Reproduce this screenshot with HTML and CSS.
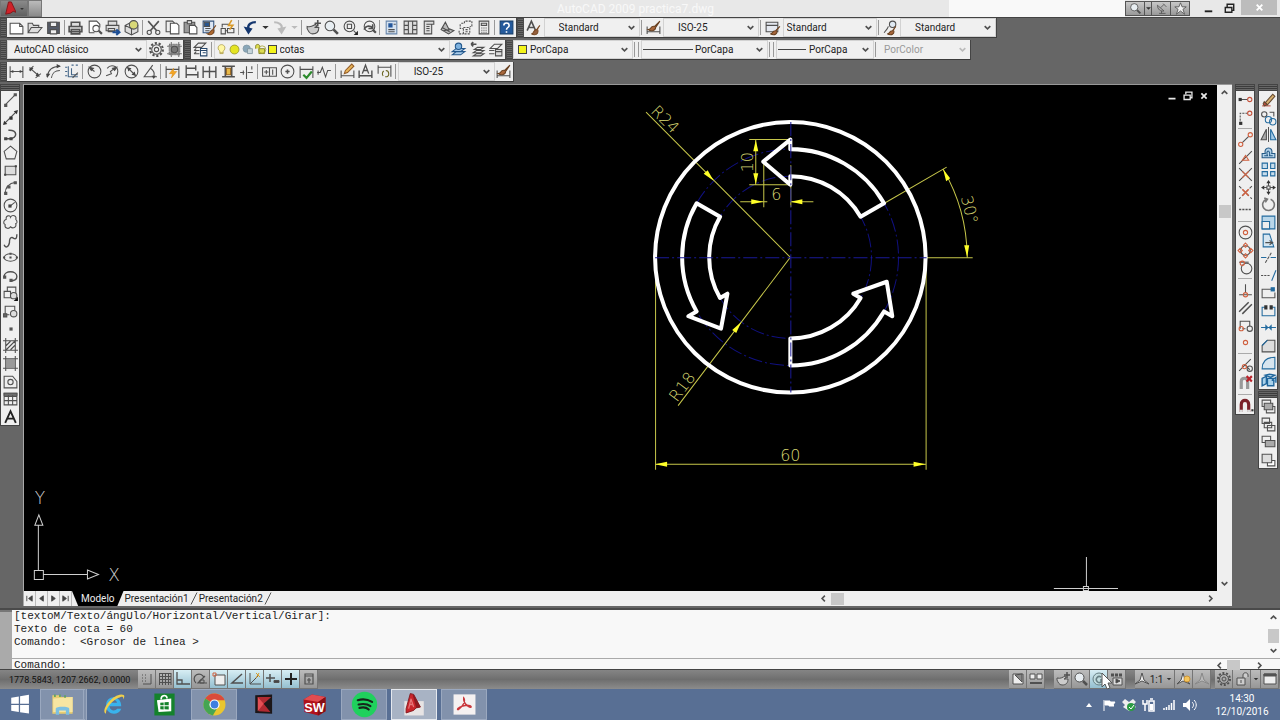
FILE: index.html
```html
<!DOCTYPE html>
<html lang="es">
<head>
<meta charset="utf-8">
<title>AutoCAD 2009 practica7.dwg</title>
<link rel="stylesheet" href="styles.css">
</head>
<body>
<svg class="sprite" aria-hidden="true">
<symbol id="new" viewBox="0 0 16 16"><path d="M2 4h9l3 3v7H2zM11 4v3h3" fill="#fff"/></symbol>
<symbol id="open" viewBox="0 0 16 16"><path d="M2 13V4h4l1 2h5v2M2 13l3-5h10l-4 5z" fill="#ddd"/></symbol>
<symbol id="save" viewBox="0 0 16 16"><path d="M2.500 3h11v10.500h-11z" fill="#555b68"/><path d="M5 3h6v4H5zM5 10h6v4H5z" fill="#eee"/></symbol>
<symbol id="print" viewBox="0 0 16 16"><path d="M4 7V3h8v4M2 7h12v5H2zM4 10h8v4H4z" fill="#ddd" stroke-width="1.500"/></symbol>
<symbol id="preview" viewBox="0 0 16 16"><path d="M3 13V2h7l3 3v3M3 13h5" fill="#fff"/><circle cx="9.500" cy="9" r="3"/><path d="M12 11l3 3" stroke-width="2"/></symbol>
<symbol id="publish" viewBox="0 0 16 16"><path d="M4 6V2h8v4M2 6h12v5H2zM4 9h6v3H4z" fill="#ddd"/><path d="M8 12.500h6M11.500 10l3 2.500-3 2.500" stroke="#1d4f96" stroke-width="2"/></symbol>
<symbol id="dwf" viewBox="0 0 16 16"><path d="M2 6l6-3 6 3v6l-6 3-6-3zM2 6l6 3 6-3M8 9v6" fill="#ddd"/><circle cx="10" cy="5.500" r="4" fill="#d8d878"/></symbol>
<symbol id="cut" viewBox="0 0 16 16"><path d="M3 2l8 9M13 2L5 11" stroke-width="1.500"/><circle cx="4" cy="12.500" r="2"/><circle cx="12" cy="12.500" r="2"/></symbol>
<symbol id="copy" viewBox="0 0 16 16"><path d="M2 2h6l2 2v8H2z" fill="#eee"/><path d="M6 4h6l2 2v8H6z" fill="#fff"/></symbol>
<symbol id="paste" viewBox="0 0 16 16"><path d="M2 3h10v10H2z" fill="#999"/><path d="M5 1.500h4v3H5z" fill="#ddd"/><path d="M7 6h5l2 2v6H7z" fill="#fff"/></symbol>
<symbol id="match" viewBox="0 0 16 16"><path d="M2 2h10v11H2z" fill="#dce7f5" stroke="#34557f"/><path d="M3 3h5v4H3z" fill="#27558f"/><path d="M4 9h5M4 11h4"/><path d="M14 6l-3 4M12 10c-4 0-3 4-6 4 3 2 7 0 6-4" fill="#b06a30" stroke="#7c4a22"/></symbol>
<symbol id="block" viewBox="0 0 16 16"><path d="M2 9h4v5H2zM8 9h6v4H8zM6 11h2M3 8V5h7"/><path d="M12 1l-3 5h4l-3 4" stroke="#d99a28" stroke-width="1.500"/></symbol>
<symbol id="undo" viewBox="0 0 16 16"><path d="M6 9C5 5 9 3 13 3" stroke="#14366e" stroke-width="2.200"/><path d="M1.500 7L10 9l-4 5.500z" fill="#14366e" stroke="none"/></symbol>
<symbol id="redo" viewBox="0 0 16 16"><path d="M10 9c1-4-3-6-7-6" stroke="#bbb" stroke-width="2"/><path d="M14.500 7L6 9l4 5.500z" fill="#bbb" stroke="none"/></symbol>
<symbol id="tri" viewBox="0 0 16 16"><path d="M5 6.500h6l-3 3z" fill="#333" stroke="none"/></symbol>
<symbol id="trig" viewBox="0 0 16 16"><path d="M5 6.500h6l-3 3z" fill="#bbb" stroke="none"/></symbol>
<symbol id="pan" viewBox="0 0 16 16"><path d="M2 7c4 1 6-1 8-2l1 2-2 1h4c0 4-2 6-6 6-3 0-4-3-5-5z" fill="#ccc"/><path d="M12 1v6M9 4h6" stroke-width="1.500"/></symbol>
<symbol id="zoom" viewBox="0 0 16 16"><circle cx="6.500" cy="6.500" r="4.500" fill="#e8eef2"/><path d="M10 10l4 4" stroke-width="2.500"/></symbol>
<symbol id="zoomw" viewBox="0 0 16 16"><circle cx="7" cy="7" r="5"/><path d="M5 5h4v4H5zM11 11l2 2"/><path d="M15 11v4h-4z" fill="#222" stroke="none"/></symbol>
<symbol id="zoomp" viewBox="0 0 16 16"><circle cx="8" cy="7" r="5"/><path d="M11 10l3 3" stroke-width="2"/><path d="M3 10c1-4 5-4 8-2M11 5v4H7" stroke-width="1.500"/></symbol>
<symbol id="props" viewBox="0 0 16 16"><path d="M3 2h10v12H3z" fill="#d5e2f0" stroke="#6785aa"/><path d="M5 4h4v4H5z" fill="#24579b" stroke="none"/><path d="M5 10h6M5 12h6M10 5h2"/></symbol>
<symbol id="design" viewBox="0 0 16 16"><path d="M2 2h12v12H2zM6 2v12M10 2v12M2 6h4M2 10h4M10 6h4M10 10h4" fill="#ddd"/></symbol>
<symbol id="palette" viewBox="0 0 16 16"><path d="M4 2h9v3h-2v9H4zM6 5h5M6 7h3M6 9h3M6 11h3" fill="#ddd"/></symbol>
<symbol id="sheet" viewBox="0 0 16 16"><path d="M2 10l4-7 3 6 5 2-5 3zM4 11l6-1M3 8l7 4" fill="#bbb"/></symbol>
<symbol id="markup" viewBox="0 0 16 16"><path d="M4 4h3V2h7v5h-2M3 5v4h3M6 8h6v6H6zM2 11v3h4M8 10h2M8 12h2" stroke-dasharray="2 1"/></symbol>
<symbol id="calc" viewBox="0 0 16 16"><path d="M3 2h9v12H3zM5 4h5v2H5z" fill="#eee"/><path d="M5 8.500h6M5 10.500h6M5 12.500h6" stroke-dasharray="1 1"/></symbol>
<symbol id="help" viewBox="0 0 16 16"><path d="M2 2h12v12H2z" fill="#245a9c" stroke="#17406f"/><path d="M5.500 6c0-3 5-3 5 0 0 2-2.500 2-2.500 4M8 11.500V13" stroke="#fff" stroke-width="1.500"/></symbol>
<symbol id="tstyle" viewBox="0 0 16 16"><path d="M2 11L6 2l4 9M4 8h4" stroke-width="1.500"/><path d="M14 6l-3 4c-4 0-2 4-5 4 4 2 7 0 6-4" fill="#955f3c" stroke="#794924"/></symbol>
<symbol id="dstyle" viewBox="0 0 16 16"><path d="M2 7v7M14 7v7M2 12h12"/><path d="M14 2l-5 5c-4-1-3 3-6 3 3 2 7 1 7-2z" fill="#a7663b" stroke="#684020"/></symbol>
<symbol id="tbstyle" viewBox="0 0 16 16"><path d="M2 3h11v9H2zM2 6h11" fill="#e4e8f0"/><path d="M15 7l-4 4c-4 0-2 3-5 3 4 2 7 0 6-3" fill="#a7663b" stroke="#684020"/></symbol>
<symbol id="mlstyle" viewBox="0 0 16 16"><path d="M2 13c2-3 3-3 4-6"/><circle cx="10" cy="5" r="3" fill="#dfe9f2"/><path d="M13 7l-3 4c-4 0-2 3-5 3 4 2 7 0 6-3" fill="#a7663b" stroke="#684020"/></symbol>
<symbol id="gear" viewBox="0 0 16 16"><circle cx="8" cy="8" r="6" stroke-width="2" stroke-dasharray="2 1.700"/><circle cx="8" cy="8" r="4.500"/><circle cx="8" cy="8" r="2"/></symbol>
<symbol id="ws" viewBox="0 0 16 16"><path d="M3 3h10v10H3z" fill="#aaa" stroke-dasharray="1 1"/><path d="M1 5h14M1 12h14M5 1v14M12 1v14" stroke="#777"/><circle cx="8" cy="8" r="3" fill="#777"/></symbol>
<symbol id="layers" viewBox="0 0 16 16"><path d="M2 12h5M2 9h5M2 6l4-4h7L9 6zM2 9l2-2M2 12l2-2"/><path d="M8 7h6v7H8zM8 9h6M10 11h3" fill="#fff" stroke="#27476b"/></symbol>
<symbol id="layers2" viewBox="0 0 16 16"><path d="M2 13l4-3h8l-4 3zM2 10l4-3h8l-4 3z" fill="#a9cbe9" stroke="#24588c"/><circle cx="8" cy="5" r="3" fill="#7db1de" stroke="#24588c"/></symbol>
<symbol id="layers3" viewBox="0 0 16 16"><path d="M4 14l3-2h7l-3 2zM4 11l3-2h7l-3 2zM5 8l3-2h6l-3 2z"/><path d="M2 3h5M2 3l2-2M2 3l2 2" stroke-width="1.500"/></symbol>
<symbol id="layers4" viewBox="0 0 16 16"><path d="M2 12h5M2 9h5M3 7l4-4h7l-4 4z"/><path d="M8 8h6v6H8zM8 10h6" fill="#ddd"/></symbol>
<symbol id="bulb" viewBox="0 0 16 16"><path d="M6 10C2 7 4 2 8 2s6 5 2 8v3H6zM6 12h4" fill="#fff7a2" stroke="#b0a04c"/></symbol>
<symbol id="sun" viewBox="0 0 16 16"><circle cx="8" cy="8" r="5.500" fill="#e4e422" stroke="#92922e"/></symbol>
<symbol id="sunvp" viewBox="0 0 16 16"><circle cx="7" cy="7" r="4.500" fill="#8aa7b9" stroke="#8299a5"/><path d="M8 7h6v6H8z" fill="#c7d5db" stroke="#7e929c"/></symbol>
<symbol id="lock" viewBox="0 0 16 16"><path d="M2 7V4c0-3 5-3 5 0v2M6 7h7v6H6z" fill="#dddc52" stroke="#777417"/><circle cx="10" cy="8" r="4.500" stroke="#a8a42f"/></symbol>
<symbol id="chev" viewBox="0 0 16 16"><path d="M5 6.500l3 3 3-3" stroke-width="1.700"/></symbol>
<symbol id="dlin" viewBox="0 0 16 16"><path d="M2 3v11M14 3v11M2 8h12"/><path d="M2 8l3-1.500v3zM14 8l-3-1.500v3z" fill="#444" stroke="none"/></symbol>
<symbol id="dali" viewBox="0 0 16 16"><path d="M3 7l4-4M9 14l5-4M4 5l8 7"/><path d="M3 4l4 1-3 3zM13 13l-4-1 2-3z" fill="#444" stroke="none"/></symbol>
<symbol id="darc" viewBox="0 0 16 16"><path d="M2 13C3 6 7 3 14 3M6 14c1-5 3-7 8-7"/><path d="M1 10h4l-3 4zM11 1v4l4-2z" fill="#444" stroke="none"/></symbol>
<symbol id="dord" viewBox="0 0 16 16"><path d="M5 3v10h9M8 5v6h6M2 4h2M2 8h2M2 12h2M8 2h2M12 2h2" stroke="#456789"/><path d="M9 14l5-5"/></symbol>
<symbol id="drad" viewBox="0 0 16 16"><circle cx="8" cy="8" r="6"/><path d="M8 8L4 5M3 4l4 1-2 2z" fill="#444"/></symbol>
<symbol id="djog" viewBox="0 0 16 16"><path d="M3 5c3-4 10-3 10 3 0 3-1 4-2 5M2 12l5-2-1-2 4-3"/><path d="M12 4l-4 1 2 2z" fill="#444"/></symbol>
<symbol id="ddia" viewBox="0 0 16 16"><circle cx="8" cy="8" r="6"/><path d="M4 4l8 8"/><path d="M4 4l4 1-3 3zM12 12l-4-1 3-3z" fill="#444" stroke="none"/></symbol>
<symbol id="dang" viewBox="0 0 16 16"><path d="M11 2L3 13h12M9 5c3 2 4 5 3 8"/><path d="M10 12h4l-2 3z" fill="#444" stroke="none"/></symbol>
<symbol id="dq" viewBox="0 0 16 16"><path d="M2 3v11M14 3v11M2 6h12"/><path d="M9 5l-4 5h3l-1 4 5-6H9z" fill="#f5a623" stroke="#d68a1d" stroke-width=".5"/></symbol>
<symbol id="dbase" viewBox="0 0 16 16"><path d="M3 2v12M3 5h9M12 2v5M3 11h11M14 8v6" stroke-width="1.300"/></symbol>
<symbol id="dcont" viewBox="0 0 16 16"><path d="M2 3v11M8 3v11M14 3v11M2 8h12" stroke-width="1.300"/></symbol>
<symbol id="dspace" viewBox="0 0 16 16"><path d="M2 3h12M2 13h12M5 3v10M11 3v10" stroke-width="1.500"/><path d="M6 5h4v6H6z" fill="#e8ba49" stroke="#98651c"/></symbol>
<symbol id="dbreak" viewBox="0 0 16 16"><path d="M2 9h4M9 9h5M8 3v12M13 3v3M5 7v4"/></symbol>
<symbol id="tol" viewBox="0 0 16 16"><path d="M1.500 4.500h13v8h-13zM8 4v8M11 6v5M3 8.500h4M5 6.500v4"/></symbol>
<symbol id="cmark" viewBox="0 0 16 16"><circle cx="8" cy="8" r="6"/><path d="M6 8h4M8 6v4" stroke-width="1.500"/></symbol>
<symbol id="dinsp" viewBox="0 0 16 16"><path d="M2 3v11M14 3v11M2 6h12"/><path d="M5 11l3 3 5-6" stroke="#2c8b2c" stroke-width="2"/></symbol>
<symbol id="djl" viewBox="0 0 16 16"><path d="M1 9h3l2-5 3 9 2-6h3M2 7v4"/></symbol>
<symbol id="dedit" viewBox="0 0 16 16"><path d="M2 7v7M14 7v7M2 12h12"/><path d="M5 10l1-3 6-6 2 2-6 6z" fill="#e8b65b" stroke="#955d28"/></symbol>
<symbol id="dtedit" viewBox="0 0 16 16"><path d="M2 7v7M14 7v7M2 12h12M5 10l3-8 3 8M6 7h4" stroke-width="1.300"/></symbol>
<symbol id="dupd" viewBox="0 0 16 16"><path d="M2 2v8M14 2v11M2 4h12"/><circle cx="9" cy="10" r="3" stroke="#6b6520" stroke-dasharray="5 2"/></symbol>
<symbol id="line" viewBox="0 0 16 16"><path d="M3 13L13 3"/><path d="M2 12h3v3H2zM11 2h3v3h-3z" fill="#555" stroke="none"/></symbol>
<symbol id="xline" viewBox="0 0 16 16"><path d="M2 14L14 2" stroke-width="1.200"/><path d="M1 15l1-4 3 3zM15 1l-1 4-3-3zM7 7h3v3H7z" fill="#333" stroke="none"/></symbol>
<symbol id="pline" viewBox="0 0 16 16"><path d="M6 4c9-1 9 8 1 8H3" stroke-width="1.400"/><path d="M2 10.500h3v3H2zM7 10.500h3v3H7z" fill="#444" stroke="none"/></symbol>
<symbol id="poly" viewBox="0 0 16 16"><path d="M8 2l6 5-2 7H4L2 7z"/></symbol>
<symbol id="rect" viewBox="0 0 16 16"><path d="M3 4h10v8H3z" fill="#ddd"/><path d="M2 11h2v2H2zM12 3h2v2h-2z" fill="#444" stroke="none"/></symbol>
<symbol id="arc" viewBox="0 0 16 16"><path d="M3 14C3 8 6 4 13 3"/><path d="M2 12h3v3H2zM11 2h3v3h-3zM5 6h3v3H5z" fill="#555" stroke="none"/></symbol>
<symbol id="circ" viewBox="0 0 16 16"><circle cx="8" cy="8" r="6"/><path d="M7 9l5-4"/><path d="M6 7h3v3H6z" fill="#444" stroke="none"/></symbol>
<symbol id="cloud" viewBox="0 0 16 16"><path d="M4 5c-1-4 4-4 4-2 2-3 6-1 5 2 2 2 1 4 0 4 1 4-3 5-5 3-2 3-6 1-5-2-2-1-2-4 1-5z"/></symbol>
<symbol id="spl" viewBox="0 0 16 16"><path d="M2 12c1 3 4 3 5-2 0-6 3-5 4-4 2 1 3 0 3-4" stroke-width="1.300"/></symbol>
<symbol id="ell" viewBox="0 0 16 16"><ellipse cx="8" cy="8" rx="6" ry="3.500"/><path d="M7 8h2M7 4.500h2M1 8h2M13 8h2" stroke-width="2"/></symbol>
<symbol id="ella" viewBox="0 0 16 16"><path d="M2 9c0-6 12-6 12 0 0 3-3 4-6 4" stroke-width="1.300"/><path d="M7 11h3v3H7zM1 8h3v3H1z" fill="#555" stroke="none"/></symbol>
<symbol id="ins" viewBox="0 0 16 16"><path d="M2 6h6v6H2zM5 6V2h8v6H9"/><circle cx="11" cy="10" r="3" fill="#ddd"/><path d="M15 11v4h-4z" fill="#111" stroke="none"/></symbol>
<symbol id="mkb" viewBox="0 0 16 16"><path d="M3 12V4h9v4M3 12h4"/><circle cx="11" cy="11" r="3" fill="#ddd"/><path d="M1.500 11h3v3h-3z" fill="#666"/></symbol>
<symbol id="pt" viewBox="0 0 16 16"><path d="M7 7h3v3H7z" fill="#555" stroke="none"/></symbol>
<symbol id="hatch" viewBox="0 0 16 16"><path d="M1 3.500h14M1 12.500h14M3.500 1v14M12.500 1v14M4 8l4-4M4 12l8-8M8 12l4-4"/></symbol>
<symbol id="grad" viewBox="0 0 16 16"><path d="M4 4h8v8H4z" fill="#999" stroke="none"/><path d="M1 3.500h14M1 12.500h14M3.500 1v14M12.500 1v14"/></symbol>
<symbol id="reg" viewBox="0 0 16 16"><path d="M2 3h8l4 5v6H2z" fill="#eee"/><circle cx="8" cy="8.500" r="2.500"/></symbol>
<symbol id="table" viewBox="0 0 16 16"><path d="M2 3h12v11H2zM2 6h12M2 10h12M6 4v10M10 4v10"/><path d="M2 3h12v2H2z" fill="#777"/></symbol>
<symbol id="mtext" viewBox="0 0 16 16"><path d="M3 14L8 3l5 11M5 10h6" stroke="#222" stroke-width="1.800"/></symbol>
<symbol id="track" viewBox="0 0 16 16"><path d="M3 8h7"/><path d="M1.500 6.500h3v3h-3z" fill="#333" stroke="none"/><circle cx="12" cy="8" r="2" stroke="#c4523c"/></symbol>
<symbol id="from" viewBox="0 0 16 16"><path d="M3 14V4h8" stroke-dasharray="2 1"/><path d="M2 12h3v3H2z" fill="#333" stroke="none"/><circle cx="12" cy="4" r="2" stroke="#c4523c"/></symbol>
<symbol id="end" viewBox="0 0 16 16"><path d="M5 11l6-6"/><circle cx="3.500" cy="12.500" r="2" stroke="#d0603f"/><circle cx="12.500" cy="3.500" r="2" stroke="#d0603f"/></symbol>
<symbol id="mid" viewBox="0 0 16 16"><path d="M2 14L14 2"/><path d="M5 10.500h6L8 6z" stroke="#d0603f"/></symbol>
<symbol id="int" viewBox="0 0 16 16"><path d="M2 2l12 12M14 2L2 14"/><path d="M5 5l6 6M11 5l-6 6" stroke="#d0603f"/></symbol>
<symbol id="app" viewBox="0 0 16 16"><path d="M2 2l12 12M14 2L2 14" stroke-dasharray="3 2"/><path d="M5 5l6 6M11 5l-6 6" stroke="#d0603f" stroke-width="1.400"/></symbol>
<symbol id="ext" viewBox="0 0 16 16"><path d="M2 8h12" stroke-dasharray="2 1" stroke-width="1.500"/></symbol>
<symbol id="cen" viewBox="0 0 16 16"><circle cx="8" cy="8" r="6"/><circle cx="8" cy="8" r="2" stroke="#d0603f"/></symbol>
<symbol id="qua" viewBox="0 0 16 16"><circle cx="8" cy="8" r="4.500"/><path d="M8 1l2 2-2 2-2-2zM8 11l2 2-2 2-2-2zM3 6l2 2-2 2-2-2zM13 6l2 2-2 2-2-2z" stroke="#d0603f"/></symbol>
<symbol id="tan" viewBox="0 0 16 16"><circle cx="9" cy="9" r="5"/><path d="M2 3h9"/><circle cx="5" cy="4" r="2" stroke="#d0603f"/></symbol>
<symbol id="per" viewBox="0 0 16 16"><path d="M8 2v8M2 12h12"/><circle cx="8" cy="12" r="2" stroke="#d0603f"/></symbol>
<symbol id="par" viewBox="0 0 16 16"><path d="M2 12l9-9M5 14l9-9" stroke-width="1.400"/></symbol>
<symbol id="insn" viewBox="0 0 16 16"><path d="M3 11V4h9v5M5 11h3"/><circle cx="12" cy="11" r="2.500"/><circle cx="4" cy="11" r="2" stroke="#d0603f"/></symbol>
<symbol id="nod" viewBox="0 0 16 16"><circle cx="8" cy="8" r="2" stroke="#d0603f"/></symbol>
<symbol id="nea" viewBox="0 0 16 16"><path d="M2 13L13 2M7 7l5 5"/><circle cx="12" cy="11" r="2.500"/><circle cx="7" cy="9" r="2" stroke="#d0603f"/></symbol>
<symbol id="non" viewBox="0 0 16 16"><path d="M4 14V7c0-4 6-4 6 0v7" stroke="#999" stroke-width="3"/><path d="M9 2l5 5M14 2L9 7" stroke="#b9232b" stroke-width="2"/></symbol>
<symbol id="osn" viewBox="0 0 16 16"><path d="M4 14V7c0-5 7-5 7 0v7" stroke="#7b222a" stroke-width="3"/><path d="M2.500 13h3M9.500 13h3" stroke="#ddd" stroke-width="2"/><path d="M13.500 11.500h2v2h-2z" fill="#333" stroke="none"/></symbol>
<symbol id="erase" viewBox="0 0 16 16"><path d="M2 14h8" stroke="#c05040"/><path d="M5 11l7-8 2 2-7 8z" fill="#d6b06f" stroke="#644931"/><path d="M4 10l3 3-3 1-1-2z" fill="#c05040" stroke="#644931"/></symbol>
<symbol id="cop" viewBox="0 0 16 16"><circle cx="4" cy="5" r="2.500"/><circle cx="8" cy="10" r="3" stroke="#236b9f"/><circle cx="12" cy="12" r="3" stroke="#236b9f"/><path d="M9 3h4v4"/></symbol>
<symbol id="mir" viewBox="0 0 16 16"><path d="M6 3v10H1z" fill="#aaa"/><path d="M10 3v10h5z" fill="#a5cbe7" stroke="#236b9f"/><path d="M8 1v14"/></symbol>
<symbol id="off" viewBox="0 0 16 16"><path d="M2 13V9h3C3 2 13 2 11 9h3v4z" fill="#b5d3ea" stroke="#245a86"/><path d="M4 11h3C5 5 10 5 9 11h3" stroke="#245a86"/></symbol>
<symbol id="arr" viewBox="0 0 16 16"><path d="M2 2h5v5H2zM10 2h4v5h-4zM2 10h5v4H2zM10 10h4v4h-4z" fill="#c8ddec" stroke="#236b9f"/></symbol>
<symbol id="mov" viewBox="0 0 16 16"><path d="M8 3v10M3 8h10"/><path d="M8 1l2 3H6zM8 15l2-3H6zM1 8l3-2v4zM15 8l-3-2v4z" fill="#333" stroke="none"/><path d="M6.500 6.500h3v3h-3z" fill="#eee"/></symbol>
<symbol id="rot" viewBox="0 0 16 16"><path d="M10 3a5.500 5.500 0 1 1-4 0M4 2l3 1-2 3" stroke-width="1.500" stroke="#777"/></symbol>
<symbol id="sca" viewBox="0 0 16 16"><path d="M2 2h12v12H2z" fill="#b9d6e9" stroke="#236b9f"/><path d="M2 7h7v7H2z" fill="#eee" stroke="#236b9f"/></symbol>
<symbol id="str" viewBox="0 0 16 16"><path d="M3 2h6l4 12H3z" fill="#d6e6f1" stroke="#236b9f"/><path d="M5 10h6M9 8l3 2-3 2"/></symbol>
<symbol id="trim" viewBox="0 0 16 16"><path d="M1 8h5M10 8h5" stroke="#236b9f"/><path d="M5 13l6-10" stroke-dasharray="3 1"/></symbol>
<symbol id="exte" viewBox="0 0 16 16"><path d="M1 8h9" stroke-dasharray="2 1"/><path d="M11 13l4-10" stroke="#236b9f"/></symbol>
<symbol id="brk1" viewBox="0 0 16 16"><path d="M12 5H2v8h12V8" stroke="#555"/><path d="M10 3h4v4h-4z" fill="#236b9f" stroke="none"/></symbol>
<symbol id="brk" viewBox="0 0 16 16"><path d="M5 5H2v8h12V5h-3" stroke="#236b9f"/><path d="M4 3h3v4H4zM9 3h3v4H9z" fill="#333" stroke="none"/></symbol>
<symbol id="join" viewBox="0 0 16 16"><path d="M1 8h14" stroke="#236b9f"/><path d="M8 8L5 5v6zM8 8l3-3v6z" fill="#236b9f" stroke="none"/></symbol>
<symbol id="cha" viewBox="0 0 16 16"><path d="M2 14V8l5-5h7v11z" fill="#ddd"/><path d="M2 8l5-5" stroke="#236b9f"/></symbol>
<symbol id="fil" viewBox="0 0 16 16"><path d="M2 14c0-8 4-11 12-11v11z" fill="#d7e5ef" stroke="#236b9f"/></symbol>
<symbol id="expl" viewBox="0 0 16 16"><path d="M2 6l4-2v7l-4 2zM7 6h6v7H7zM5 3l4-1 5 1-4 2zM11 8l4-3v5" fill="#a9d1ea" stroke="#20669c" stroke-width="1.300"/></symbol>
<symbol id="ord1" viewBox="0 0 16 16"><path d="M2 2h8v6H2zM6 8h8v6H6z" fill="#eee"/><path d="M4 5h8v6H4z" fill="#aaa"/></symbol>
<symbol id="ord2" viewBox="0 0 16 16"><path d="M2 2h7v5H2zM4 6h7v5H4zM7 9h7v5H7z" fill="#eee"/></symbol>
<symbol id="ord3" viewBox="0 0 16 16"><path d="M2 3h8v6H2z" fill="#eee"/><path d="M5 7h9v6H5z" fill="#aaa"/></symbol>
<symbol id="ord4" viewBox="0 0 16 16"><path d="M7 9h7v5H7z" fill="#fff"/><path d="M2 3h9v8H2z" fill="#ddd"/></symbol>
<symbol id="snap" viewBox="0 0 16 16"><path d="M3 4h6M3 7h6M3 10h6" stroke-dasharray="1 2"/><path d="M12 3v10H4"/></symbol>
<symbol id="grid" viewBox="0 0 16 16"><path d="M2 2.500h12M2 5.500h12M2 8.500h12M2 11.500h12M2.500 2v12M5.500 2v12M8.500 2v12M11.500 2v12M14 2v12"/></symbol>
<symbol id="orto" viewBox="0 0 16 16"><path d="M2 1v12h13M2 9h5v4" stroke-width="1.300"/></symbol>
<symbol id="polar" viewBox="0 0 16 16"><path d="M14 12H5l7-7M3 12a5 5 0 1 1 8-5" stroke-width="1.200"/><path d="M7 9h4v3H7z"/></symbol>
<symbol id="refent" viewBox="0 0 16 16"><path d="M4 4h10v10H4z" fill="#eee"/><path d="M2 2h3v3H2z" stroke="#d0603f"/></symbol>
<symbol id="rast" viewBox="0 0 16 16"><path d="M13 3L3 12h11" stroke-width="1.500"/></symbol>
<symbol id="scud" viewBox="0 0 16 16"><path d="M3 2v11h11M3 13l9-9"/><path d="M9 2l4 4M12 2L9 7" stroke="#d69b2b"/></symbol>
<symbol id="din" viewBox="0 0 16 16"><path d="M1 7h9M5 3v8" stroke-width="1.500"/><path d="M9 9.500h5v2H9z" fill="#444"/></symbol>
<symbol id="glin" viewBox="0 0 16 16"><path d="M2 8h12M8 2v12" stroke="#222" stroke-width="2"/></symbol>
<symbol id="pr" viewBox="0 0 16 16"><path d="M4 3h8v10H4zM4 5h8M8 7v5M6 9h4" stroke-width="1.200"/></symbol>
<symbol id="model" viewBox="0 0 16 16"><path d="M3 3h10v10H3z" fill="#eee"/><path d="M5 4l7 7V3z" fill="#888"/></symbol>
<symbol id="views" viewBox="0 0 16 16"><path d="M2 3h5v5H2zM9 3h5v5H9z" fill="#eee"/><path d="M2 12h12" stroke-width="2"/></symbol>
<symbol id="wheel" viewBox="0 0 16 16"><circle cx="8" cy="8" r="6" fill="#c2dde0" stroke="#667f84"/><path d="M10 6a3 3 0 1 0 0 5V8" stroke="#667f84" stroke-width="1.500"/></symbol>
<symbol id="motion" viewBox="0 0 16 16"><path d="M2 4h12" stroke-width="3" stroke-dasharray="3 1"/><path d="M4 7h9v7H4z" fill="#ddd"/><path d="M7 8v4l4-2z" fill="#444"/></symbol>
<symbol id="anno" viewBox="0 0 16 16"><path d="M8 2l2 7 5 4-7-3-7 3 5-4z" fill="#eee"/></symbol>
<symbol id="annoy" viewBox="0 0 16 16"><path d="M7 2l2 7 5 4-7-3-6 3 4-4z" fill="#eee"/><circle cx="11" cy="8" r="3" fill="#f4c55b" stroke="#cc9437"/></symbol>
<symbol id="annog" viewBox="0 0 16 16"><path d="M8 2l2 7 5 4-7-3-7 3 5-4z" fill="#bbb" stroke="#888"/></symbol>
<symbol id="unlock" viewBox="0 0 16 16"><path d="M3 7h8v7H3zM9 7V4c0-3 5-3 5 0v2M7 9v3" fill="#ccc"/></symbol>
<symbol id="full" viewBox="0 0 16 16"><path d="M2 3h12v10H2z" fill="#eee"/><path d="M2 3h12v2H2z" fill="#555"/></symbol>
<symbol id="dish" viewBox="0 0 16 16"><path d="M3 4c0 5 4 8 8 7zM7 7l4-4M5 14h8M8 11v3M10 2l4 4"/></symbol>
<symbol id="star" viewBox="0 0 16 16"><path d="M8 1l2 5h5l-4 3 2 6-5-4-5 4 2-6-4-3h5z" fill="#eee"/></symbol>
<symbol id="min" viewBox="0 0 16 16"><path d="M4 11h8" stroke-width="2"/></symbol>
<symbol id="res" viewBox="0 0 16 16"><path d="M3.500 7h7v5h-7zM5.500 6V3.500h7v6.500H11" stroke-width="1.500"/></symbol>
<symbol id="cls" viewBox="0 0 16 16"><path d="M5 5l6 6M11 5l-6 6" stroke-width="2"/></symbol>
<symbol id="acad" viewBox="0 0 32 32"><path d="M4 12h23v17H4z" fill="#e7e4e4" stroke="none"/><path d="M6 21L11 3l4 1 8 15-5 1-3 3-9 3z" fill="#c9252b" stroke="#7d171c"/><path d="M15 4l8 15-5 1-4-15z" fill="#8e1a20" stroke="none"/><path d="M12 9l-3 12M12 10l3 9M10 16h4" stroke="#e7777a" stroke-width="1.500"/></symbol>
<symbol id="alogo" viewBox="0 0 16 16"><path d="M5 14L8 1h3l5 11-3-1-3 2z" fill="#cf2229" stroke="#83161b"/></symbol>
</svg>

<header class="titlebar">
  <button class="appmenu" aria-label="Menú de aplicación"><svg class="logo"><use href="#alogo"/></svg><svg class="i tiny"><use href="#tri"/></svg></button>
  <div class="qat"></div>
  <h1>AutoCAD 2009 practica7.dwg</h1>
  <input class="search" type="text" aria-label="Buscar">
  <div class="info">
    <button aria-label="Buscar"><svg class="i"><use href="#zoom"/></svg></button>
    <button class="slim" aria-label="Opciones de búsqueda"><svg class="i tiny"><use href="#tri"/></svg></button>
    <button aria-label="Centro de comunicación"><svg class="i"><use href="#dish"/></svg></button>
    <button aria-label="Favoritos"><svg class="i"><use href="#star"/></svg></button>
  </div>
  <div class="winbtns">
    <button aria-label="Minimizar"><svg class="i"><use href="#min"/></svg></button>
    <button aria-label="Restaurar"><svg class="i"><use href="#res"/></svg></button>
    <button class="close" aria-label="Cerrar"><svg class="i"><use href="#cls"/></svg></button>
  </div>
</header>

<div class="dock">
<div class="row">
  <span class="grip"></span>
  <div class="bar std">
    <button aria-label="Nuevo"><svg class="i"><use href="#new"/></svg></button>
    <button aria-label="Abrir"><svg class="i"><use href="#open"/></svg></button>
    <button aria-label="Guardar"><svg class="i"><use href="#save"/></svg></button><i class="sep"></i>
    <button aria-label="Trazar"><svg class="i"><use href="#print"/></svg></button>
    <button aria-label="Vista preliminar"><svg class="i"><use href="#preview"/></svg></button>
    <button aria-label="Publicar"><svg class="i"><use href="#publish"/></svg></button>
    <button aria-label="DWF 3D"><svg class="i"><use href="#dwf"/></svg></button><i class="sep"></i>
    <button aria-label="Cortar"><svg class="i"><use href="#cut"/></svg></button>
    <button aria-label="Copiar"><svg class="i"><use href="#copy"/></svg></button>
    <button aria-label="Pegar"><svg class="i"><use href="#paste"/></svg></button>
    <button aria-label="Igualar propiedades"><svg class="i"><use href="#match"/></svg></button>
    <button aria-label="Editor de bloques"><svg class="i"><use href="#block"/></svg></button><i class="sep"></i>
    <button aria-label="Deshacer"><svg class="i"><use href="#undo"/></svg></button>
    <button class="drop" aria-label="Lista deshacer"><svg class="i"><use href="#tri"/></svg></button>
    <button aria-label="Rehacer"><svg class="i"><use href="#redo"/></svg></button>
    <button class="drop" aria-label="Lista rehacer"><svg class="i"><use href="#trig"/></svg></button><i class="sep"></i>
    <button aria-label="Encuadre"><svg class="i"><use href="#pan"/></svg></button>
    <button aria-label="Zoom"><svg class="i"><use href="#zoom"/></svg></button>
    <button aria-label="Zoom ventana"><svg class="i"><use href="#zoomw"/></svg></button>
    <button aria-label="Zoom previo"><svg class="i"><use href="#zoomp"/></svg></button><i class="sep"></i>
    <button aria-label="Propiedades"><svg class="i"><use href="#props"/></svg></button>
    <button aria-label="DesignCenter"><svg class="i"><use href="#design"/></svg></button>
    <button aria-label="Paletas"><svg class="i"><use href="#palette"/></svg></button>
    <button aria-label="Conjuntos de planos"><svg class="i"><use href="#sheet"/></svg></button>
    <button aria-label="Marcas"><svg class="i"><use href="#markup"/></svg></button>
    <button aria-label="Calculadora"><svg class="i"><use href="#calc"/></svg></button><i class="sep"></i>
    <button aria-label="Ayuda"><svg class="i"><use href="#help"/></svg></button>
  </div>
  <span class="grip"></span>
  <div class="bar styles">
    <button aria-label="Estilo de texto"><svg class="i"><use href="#tstyle"/></svg></button>
    <label class="combo c1"><select aria-label="Estilo de texto"><option>Standard</option></select><svg class="i"><use href="#chev"/></svg></label><i class="sep"></i>
    <button aria-label="Estilo de cota"><svg class="i"><use href="#dstyle"/></svg></button>
    <label class="combo c1"><select aria-label="Estilo de cota"><option>ISO-25</option></select><svg class="i"><use href="#chev"/></svg></label><i class="sep"></i>
    <button aria-label="Estilo de tabla"><svg class="i"><use href="#tbstyle"/></svg></button>
    <label class="combo c2"><select aria-label="Estilo de tabla"><option>Standard</option></select><svg class="i"><use href="#chev"/></svg></label><i class="sep"></i>
    <button aria-label="Estilo de directriz"><svg class="i"><use href="#mlstyle"/></svg></button>
    <label class="combo c1"><select aria-label="Estilo de directriz"><option>Standard</option></select><svg class="i"><use href="#chev"/></svg></label>
  </div>
</div>
<div class="row">
  <span class="grip"></span>
  <div class="bar wspace">
    <label class="combo"><select aria-label="Espacio de trabajo"><option>AutoCAD clásico</option></select><svg class="i"><use href="#chev"/></svg></label>
    <button aria-label="Parámetros"><svg class="i"><use href="#gear"/></svg></button>
    <button aria-label="Mi espacio de trabajo"><svg class="i"><use href="#ws"/></svg></button>
  </div>
  <span class="grip"></span>
  <div class="bar layerbar">
    <button aria-label="Propiedades de capas"><svg class="i"><use href="#layers"/></svg></button><i class="sep"></i>
    <label class="combo clayer"><select aria-label="Capa"><option>cotas</option></select><span class="state"><svg class="i"><use href="#bulb"/></svg><svg class="i"><use href="#sun"/></svg><svg class="i"><use href="#sunvp"/></svg><svg class="i"><use href="#lock"/></svg><b class="swatch"></b></span><svg class="i"><use href="#chev"/></svg></label>
    <button aria-label="Definir capa actual"><svg class="i"><use href="#layers2"/></svg></button>
    <button aria-label="Capa previa"><svg class="i"><use href="#layers3"/></svg></button>
    <button aria-label="Estados de capa"><svg class="i"><use href="#layers4"/></svg></button>
  </div>
  <span class="grip"></span>
  <div class="bar propbar">
    <label class="combo ccolor"><select aria-label="Color"><option>PorCapa</option></select><span class="state"><b class="swatch"></b></span><svg class="i"><use href="#chev"/></svg></label><i class="sep"></i><i class="sep"></i>
    <label class="combo cltype"><select aria-label="Tipo de línea"><option>PorCapa</option></select><span class="state"><b class="rule"></b></span><svg class="i"><use href="#chev"/></svg></label><i class="sep"></i><i class="sep"></i>
    <label class="combo clw"><select aria-label="Grosor de línea"><option>PorCapa</option></select><span class="state"><b class="rule short"></b></span><svg class="i"><use href="#chev"/></svg></label><i class="sep"></i>
    <label class="combo cplot"><select aria-label="Estilo de trazado" disabled><option>PorColor</option></select><svg class="i"><use href="#chev"/></svg></label>
  </div>
</div>
<div class="row">
  <span class="grip"></span>
  <div class="bar dimbar">
    <button aria-label="Lineal"><svg class="i"><use href="#dlin"/></svg></button>
    <button aria-label="Alineada"><svg class="i"><use href="#dali"/></svg></button>
    <button aria-label="Longitud de arco"><svg class="i"><use href="#darc"/></svg></button>
    <button aria-label="Coordenada"><svg class="i"><use href="#dord"/></svg></button><i class="sep"></i>
    <button aria-label="Radio"><svg class="i"><use href="#drad"/></svg></button>
    <button aria-label="Con recodo"><svg class="i"><use href="#djog"/></svg></button>
    <button aria-label="Diámetro"><svg class="i"><use href="#ddia"/></svg></button>
    <button aria-label="Angular"><svg class="i"><use href="#dang"/></svg></button><i class="sep"></i>
    <button aria-label="Cota rápida"><svg class="i"><use href="#dq"/></svg></button>
    <button aria-label="Línea base"><svg class="i"><use href="#dbase"/></svg></button>
    <button aria-label="Continua"><svg class="i"><use href="#dcont"/></svg></button>
    <button aria-label="Espaciado"><svg class="i"><use href="#dspace"/></svg></button>
    <button aria-label="Corte de cota"><svg class="i"><use href="#dbreak"/></svg></button><i class="sep"></i>
    <button aria-label="Tolerancia"><svg class="i"><use href="#tol"/></svg></button>
    <button aria-label="Marca de centro"><svg class="i"><use href="#cmark"/></svg></button>
    <button aria-label="Inspección"><svg class="i"><use href="#dinsp"/></svg></button>
    <button aria-label="Lineal con recodo"><svg class="i"><use href="#djl"/></svg></button><i class="sep"></i>
    <button aria-label="Editar cota"><svg class="i"><use href="#dedit"/></svg></button>
    <button aria-label="Editar texto"><svg class="i"><use href="#dtedit"/></svg></button>
    <button aria-label="Actualizar"><svg class="i"><use href="#dupd"/></svg></button><i class="sep"></i>
    <label class="combo cdim"><select aria-label="Estilo de cota actual"><option>ISO-25</option></select><svg class="i"><use href="#chev"/></svg></label>
    <button aria-label="Gestor de estilos"><svg class="i"><use href="#dstyle"/></svg></button>
  </div>
</div>
</div>

<main class="work">
  <div class="side draw">
    <span class="cap"></span>
    <div class="tools t19">
      <button aria-label="Línea"><svg class="i"><use href="#line"/></svg></button>
      <button aria-label="Línea auxiliar"><svg class="i"><use href="#xline"/></svg></button>
      <button aria-label="Polilínea"><svg class="i"><use href="#pline"/></svg></button>
      <button aria-label="Polígono"><svg class="i"><use href="#poly"/></svg></button>
      <button aria-label="Rectángulo"><svg class="i"><use href="#rect"/></svg></button>
      <button aria-label="Arco"><svg class="i"><use href="#arc"/></svg></button>
      <button aria-label="Círculo"><svg class="i"><use href="#circ"/></svg></button>
      <button aria-label="Nube de revisión"><svg class="i"><use href="#cloud"/></svg></button>
      <button aria-label="Spline"><svg class="i"><use href="#spl"/></svg></button>
      <button aria-label="Elipse"><svg class="i"><use href="#ell"/></svg></button>
      <button aria-label="Arco elíptico"><svg class="i"><use href="#ella"/></svg></button>
      <button aria-label="Insertar bloque"><svg class="i"><use href="#ins"/></svg></button>
      <button aria-label="Crear bloque"><svg class="i"><use href="#mkb"/></svg></button>
      <button aria-label="Punto"><svg class="i"><use href="#pt"/></svg></button>
      <button aria-label="Sombreado"><svg class="i"><use href="#hatch"/></svg></button>
      <button aria-label="Degradado"><svg class="i"><use href="#grad"/></svg></button>
      <button aria-label="Región"><svg class="i"><use href="#reg"/></svg></button>
      <button aria-label="Tabla"><svg class="i"><use href="#table"/></svg></button>
      <button aria-label="Texto"><svg class="i"><use href="#mtext"/></svg></button>
    </div>
  </div>

  <section class="doc">
    <div class="view">
      <svg class="canvas" viewBox="24 86 1193 505" preserveAspectRatio="xMidYMid slice" role="img" aria-label="Dibujo acotado">
        <g class="axis">
          <circle cx="790" cy="258" r="108"/><circle cx="790" cy="258" r="81"/>
        </g>
        <g class="dim">
          <path d="M655.500 258V470M925.500 258V470M655 464.500H925"/>
          <path d="M646 113L790 258L678 406M883 204.500L946 168M926 258.500H972M966.500 258A176 176 0 0 0 942.500 170"/>
          <path d="M749 140.500H790M749 185.500H790M755.500 141V185M763.500 163V208M790.500 166V208M740 202.500H767M790 202.500H813"/>
        </g>
        <g class="tips">
          <path d="M655 464.500l12-2.500v5zM925 464.500l-12-2.500v5zM755.500 141l-2.500 11h5zM755.500 185l-2.500-11h5zM763 202.500l-12-2.500v5zM790 202.500l12-2.500v5zM966.500 258l-3-12h5zM942.500 170l3 12 4-3zM713.500 181.500l-10-7 4-3.500zM741 322.500l-9 8 4 3z"/>
        </g>
        <g class="part">
          <circle cx="790" cy="258" r="135"/>
          <path id="arrow" d="M790 150A108 108 0 0 1 883.500 204L860.100 217.500A81 81 0 0 0 790 177V185.500L763 162.500L790 140.500Z"/>
          <use href="#arrow" transform="rotate(-120 790 258)"/>
          <use href="#arrow" transform="rotate(120 790 258)"/>
        </g>
        <path class="axis" d="M655 258.500H926M790.500 123V393"/>
        <g class="dimtext">
          <text x="790" y="461" text-anchor="middle">60</text>
          <text x="776" y="201" text-anchor="middle">6</text>
          <text transform="translate(753 163) rotate(-90)" text-anchor="middle">10</text>
          <text transform="translate(650 113) rotate(45)">R24</text>
          <text transform="translate(677 403) rotate(-53)">R18</text>
          <text transform="translate(960 198) rotate(76)">30°</text>
        </g>
        <g class="ucs">
          <path d="M35.500 570.500h9v9h-9zM39.500 570V526M36 525.500h8L40 515zM45 574.500H88M88.500 570v9l11-4.500z"/>
          <text x="41" y="504" text-anchor="middle">Y</text>
          <text x="115" y="581" text-anchor="middle">X</text>
        </g>
        <path class="cross" d="M1085.500 557V587M1053 588.500H1117M1082.500 586.500h5v4h-5z"/>
      </svg>
      <div class="mdi">
        <button aria-label="Minimizar dibujo"><svg class="i"><use href="#min"/></svg></button>
        <button aria-label="Restaurar dibujo"><svg class="i"><use href="#res"/></svg></button>
        <button aria-label="Cerrar dibujo"><svg class="i"><use href="#cls"/></svg></button>
      </div>
      <div class="vscroll"><svg class="i flip"><use href="#chev"/></svg><span class="lead"></span><span class="thumb"></span><span class="fill"></span><svg class="i"><use href="#chev"/></svg></div>
    </div>
    <div class="tabs">
      <div class="nav">
        <button aria-label="Primera"><svg viewBox="0 0 10 10"><path d="M2 2v6M8 2v6L4 5z"/></svg></button>
        <button aria-label="Anterior"><svg viewBox="0 0 10 10"><path d="M7 2v6L3 5z"/></svg></button>
        <button aria-label="Siguiente"><svg viewBox="0 0 10 10"><path d="M3 2v6l4-3z"/></svg></button>
        <button aria-label="Última"><svg viewBox="0 0 10 10"><path d="M8 2v6M2 2v6l4-3z"/></svg></button>
      </div>
      <button class="tab on">Modelo</button>
      <button class="tab">Presentación1</button><svg class="slash" viewBox="0 0 8 14"><path d="M1 13L7 1"/></svg>
      <button class="tab">Presentación2</button><svg class="slash" viewBox="0 0 8 14"><path d="M1 13L7 1"/></svg>
      <div class="hscroll"><svg class="i left"><use href="#chev"/></svg><span class="hthumb"></span><span class="fill"></span><svg class="i right"><use href="#chev"/></svg></div>
    </div>
  </section>

  <div class="side snapbar">
    <span class="cap"></span>
    <div class="tools t17">
      <button aria-label="Rastreo"><svg class="i"><use href="#track"/></svg></button>
      <button aria-label="Desde"><svg class="i"><use href="#from"/></svg></button><i class="hsep"></i>
      <button aria-label="Punto final"><svg class="i"><use href="#end"/></svg></button>
      <button aria-label="Punto medio"><svg class="i"><use href="#mid"/></svg></button>
      <button aria-label="Intersección"><svg class="i"><use href="#int"/></svg></button>
      <button aria-label="Intersección ficticia"><svg class="i"><use href="#app"/></svg></button>
      <button aria-label="Extensión"><svg class="i"><use href="#ext"/></svg></button><i class="hsep"></i>
      <button aria-label="Centro"><svg class="i"><use href="#cen"/></svg></button>
      <button aria-label="Cuadrante"><svg class="i"><use href="#qua"/></svg></button>
      <button aria-label="Tangente"><svg class="i"><use href="#tan"/></svg></button><i class="hsep"></i>
      <button aria-label="Perpendicular"><svg class="i"><use href="#per"/></svg></button>
      <button aria-label="Paralelo"><svg class="i"><use href="#par"/></svg></button>
      <button aria-label="Inserción"><svg class="i"><use href="#insn"/></svg></button>
      <button aria-label="Nodo"><svg class="i"><use href="#nod"/></svg></button><i class="hsep"></i>
      <button aria-label="Cercano"><svg class="i"><use href="#nea"/></svg></button>
      <button aria-label="Ninguno"><svg class="i"><use href="#non"/></svg></button><i class="hsep"></i>
      <button aria-label="Parámetros de referencia"><svg class="i"><use href="#osn"/></svg></button>
    </div>
  </div>
  <div class="side modbar">
    <span class="cap"></span>
    <div class="tools tmod">
      <button aria-label="Borrar"><svg class="i"><use href="#erase"/></svg></button>
      <button aria-label="Copiar objeto"><svg class="i"><use href="#cop"/></svg></button>
      <button aria-label="Simetría"><svg class="i"><use href="#mir"/></svg></button>
      <button aria-label="Desfase"><svg class="i"><use href="#off"/></svg></button>
      <button aria-label="Matriz"><svg class="i"><use href="#arr"/></svg></button>
      <button aria-label="Desplazar"><svg class="i"><use href="#mov"/></svg></button>
      <button aria-label="Girar"><svg class="i"><use href="#rot"/></svg></button>
      <button aria-label="Escala"><svg class="i"><use href="#sca"/></svg></button>
      <button aria-label="Estirar"><svg class="i"><use href="#str"/></svg></button>
      <button aria-label="Recortar"><svg class="i"><use href="#trim"/></svg></button>
      <button aria-label="Alargar"><svg class="i"><use href="#exte"/></svg></button>
      <button aria-label="Partir en un punto"><svg class="i"><use href="#brk1"/></svg></button>
      <button aria-label="Partir"><svg class="i"><use href="#brk"/></svg></button>
      <button aria-label="Juntar"><svg class="i"><use href="#join"/></svg></button>
      <button aria-label="Chaflán"><svg class="i"><use href="#cha"/></svg></button>
      <button aria-label="Empalme"><svg class="i"><use href="#fil"/></svg></button>
      <button aria-label="Descomponer"><svg class="i"><use href="#expl"/></svg></button>
    </div>
    <span class="cap second"></span>
    <div class="tools t4">
      <button aria-label="Poner delante"><svg class="i"><use href="#ord1"/></svg></button>
      <button aria-label="Enviar detrás"><svg class="i"><use href="#ord2"/></svg></button>
      <button aria-label="Encima de objetos"><svg class="i"><use href="#ord3"/></svg></button>
      <button aria-label="Debajo de objetos"><svg class="i"><use href="#ord4"/></svg></button>
    </div>
  </div>
</main>

<section class="command">
  <div class="cgrip"></div>
  <div class="cbody">
    <div class="history"><pre>[textoM/Texto/ángUlo/Horizontal/Vertical/Girar]:
Texto de cota = 60
Comando:  &lt;Grosor de línea &gt;</pre>
      <div class="cscroll"><svg class="i flip"><use href="#chev"/></svg><span class="cthumb"></span><svg class="i"><use href="#chev"/></svg></div>
    </div>
    <div class="prompt"><label for="cmd">Comando:</label><input id="cmd" type="text">
      <div class="pscroll"><svg class="i left"><use href="#chev"/></svg><span class="hthumb"></span><svg class="i right"><use href="#chev"/></svg></div>
    </div>
  </div>
</section>

<footer class="status">
  <span class="coords">1778.5843, 1207.2662, 0.0000</span>
  <div class="sgroup modes">
    <button aria-label="Forzcursor"><svg class="i"><use href="#snap"/></svg></button>
    <button aria-label="Rejilla"><svg class="i"><use href="#grid"/></svg></button>
    <button class="on" aria-label="Orto"><svg class="i"><use href="#orto"/></svg></button>
    <button aria-label="Polar"><svg class="i"><use href="#polar"/></svg></button>
    <button class="on" aria-label="Refent"><svg class="i"><use href="#refent"/></svg></button>
    <button class="on" aria-label="Rastreo"><svg class="i"><use href="#rast"/></svg></button>
    <button class="on" aria-label="SCPD"><svg class="i"><use href="#scud"/></svg></button>
    <button class="on" aria-label="Din"><svg class="i"><use href="#din"/></svg></button>
    <button class="on" aria-label="GLN"><svg class="i"><use href="#glin"/></svg></button>
    <button aria-label="PR"><svg class="i"><use href="#pr"/></svg></button>
  </div>
  <span class="fill"></span>
  <div class="sgroup">
    <button aria-label="Modelo"><svg class="i"><use href="#model"/></svg></button>
    <button aria-label="Vistas"><svg class="i"><use href="#views"/></svg></button>
  </div>
  <div class="sgroup nav4">
    <button aria-label="Encuadre"><svg class="i"><use href="#pan"/></svg></button>
    <button aria-label="Zoom"><svg class="i"><use href="#zoom"/></svg></button>
    <button class="on" aria-label="SteeringWheel"><svg class="i"><use href="#wheel"/></svg><svg class="pointer" viewBox="0 0 12 18"><path d="M1 1v14l3-3 2 5 3-1-2-5h4z"/></svg></button>
    <button aria-label="ShowMotion"><svg class="i"><use href="#motion"/></svg></button>
  </div>
  <div class="sgroup annos">
    <button class="scale"><svg class="i"><use href="#anno"/></svg>1:1<svg class="i tiny"><use href="#tri"/></svg></button>
    <button aria-label="Visibilidad de anotación"><svg class="i"><use href="#annoy"/></svg></button>
    <button aria-label="Escala automática"><svg class="i"><use href="#annog"/></svg></button>
  </div>
  <div class="sgroup last">
    <button aria-label="Espacio de trabajo"><svg class="i"><use href="#gear"/></svg></button>
    <button aria-label="Bloquear"><svg class="i"><use href="#unlock"/></svg></button>
    <button class="slim" aria-label="Menú de barra de estado"><svg class="i tiny"><use href="#tri"/></svg></button>
    <button aria-label="Limpiar pantalla"><svg class="i"><use href="#full"/></svg></button>
  </div>
</footer>

<nav class="taskbar">
  <button class="start" aria-label="Inicio"><svg viewBox="0 0 32 32"><path d="M5 8l9-1.500V15H5zM15.500 6.200L26 4.500V15H15.500zM5 16.500h9V25l-9-1.500zM15.500 16.500H26v10.300L15.500 25.200z" fill="#fff"/></svg></button>
  <button class="open stack" aria-label="Explorador"><svg viewBox="0 0 32 32"><path d="M4 5h9l2 2h13v20H4z" fill="#e9cd70"/><path d="M5 9l23-2v18H5z" fill="#f6e5a2"/><path d="M8 28v-7c0-3 16-3 16 0v7h-4v-5h-8v5z" fill="#7cc0e2"/><path d="M7 4v3M13 4v3M19 5v3" stroke="#5da260" stroke-width="2"/></svg></button>
  <button aria-label="Internet Explorer"><svg viewBox="0 0 32 32"><path d="M24 18H10c1 6 7 6 9 3h5c-3 9-18 8-18-4 0-13 18-13 18 1zM10 14h9c-1-5-8-5-9 0z" fill="#39b3ed"/><path d="M6 27C-1 25 11 5 24 4c5 0 4 3 2 6 1-4-1-4-5-2C14 11 5 20 6 27z" fill="#efcf4c"/></svg></button>
  <button aria-label="Tienda"><svg viewBox="0 0 32 32"><path d="M4 3h24v26H4z" fill="#14822c"/><path d="M7 11l17-2v15l-15 1z" fill="#fff"/><path d="M12 10c0-6 7-6 7-1" fill="none" stroke="#fff" stroke-width="2"/><path d="M11 14l4-.5V17h-4zM16 13.400l5-.5V17h-5zM11 18h4v4l-4-.5zM16 18h5v4l-5-.3z" fill="#14822c"/></svg></button>
  <button class="open" aria-label="Chrome"><svg viewBox="0 0 32 32"><circle cx="16" cy="16" r="13" fill="#e9c62f"/><path d="M16 16L5 9a13 13 0 0 1 23 2H16z" fill="#da4a3c"/><path d="M16 16L5 9a13 13 0 0 0 9 20L20 19z" fill="#45a553"/><circle cx="16" cy="16" r="6" fill="#fff"/><circle cx="16" cy="16" r="4.600" fill="#3e7fe0"/></svg></button>
  <button aria-label="CCleaner"><svg viewBox="0 0 32 32"><path d="M5 5l20-1v23L5 26z" fill="#1c1719"/><path d="M8 7h16L15 15l8 10-14-1z" fill="#b02a32"/><path d="M8 7l7 8-7 9z" fill="#e45055"/></svg></button>
  <button aria-label="SolidWorks"><svg viewBox="0 0 32 32"><path d="M3 10l10-6 16 3v17l-8 5L4 25z" fill="#b1121b"/><path d="M3 10l10-6 16 3-8 6z" fill="#e34c50"/><path d="M20 13l9-6v17l-9 5z" fill="#860f15"/><text x="16" y="25" text-anchor="middle" class="sw">SW</text></svg></button>
  <button class="open" aria-label="Spotify"><svg viewBox="0 0 32 32"><circle cx="16" cy="16" r="15" fill="#1fd15d"/><path d="M8 11c6-2 12-1 17 2M9 16c5-1 10-1 14 2M10 20c4-1 8-1 11 2" fill="none" stroke="#16251b" stroke-width="2.500" stroke-linecap="round"/></svg></button>
  <button class="open active" aria-label="AutoCAD"><svg viewBox="0 0 32 32"><use href="#acad"/></svg></button>
  <button class="open" aria-label="PDF"><svg viewBox="0 0 32 32"><path d="M3 4h26v24H3z" fill="#f5f1f1"/><path d="M15 8c3 4-1 10-6 14-3 1-1-3 5-4 5-2 10-1 10 1-1 2-10-4-9-11z" fill="none" stroke="#c9363b" stroke-width="1.500"/></svg></button>
  <span class="fill"></span>
  <div class="tray">
    <svg viewBox="0 0 16 16"><path d="M5 10l3-4 3 4z" fill="#fff"/></svg>
    <svg viewBox="0 0 16 16"><path d="M3 3v11M4 4h5v1h5l-2 3 1 1H8V8H4z" fill="#fff" stroke="#fff"/></svg>
    <svg viewBox="0 0 16 16"><path d="M4 2l4 3 4-3 3 3-3 3 3 2-7 4-6-4 2-2-3-3z" fill="#eee"/><circle cx="10" cy="10" r="4" fill="#2b9b43"/><path d="M8 10l2 2 3-4" fill="none" stroke="#fff"/></svg>
    <svg viewBox="0 0 16 16"><path d="M2 3v4h4V3M4 7v7M8 4h5v10H8zM9 2h3" fill="none" stroke="#fff" stroke-width="1.500"/><path d="M9 7h3v6H9z" fill="#fff"/></svg>
    <svg viewBox="0 0 16 16"><path d="M3 13v-2M5.500 13v-3M8 13V8M10.500 13V6M13 13V3" stroke="#fff" stroke-width="1.500"/></svg>
    <svg viewBox="0 0 16 16"><path d="M2 6h3l4-4v12l-4-4H2z" fill="#fff"/><path d="M11 5c2 2 2 4 0 6M13 3c3 3 3 7 0 10" fill="none" stroke="#fff"/></svg>
  </div>
  <time class="clock">14:30<br>12/10/2016</time>
</nav>
</body>
</html>
```

FILE: styles.css
```css
* { box-sizing: border-box; }
html, body { height: 100%; }
body {
  margin: 0;
  display: flex;
  flex-direction: column;
  min-height: 100vh;
  overflow: hidden;
  background: #666;
  color: #222;
  font: 10px/13px Roboto, "Liberation Sans", sans-serif;
}
.sprite { position: absolute; width: 0; height: 0; }
button, input, select { font: inherit; color: inherit; margin: 0; }
button {
  border: 0;
  padding: 0;
  background: none;
  display: flex;
  align-items: center;
  justify-content: center;
  min-width: 0;
}
.i { width: 17px; height: 17px; flex: none; fill: none; stroke: #505050; stroke-width: 1; }
.i.tiny { width: 14px; height: 14px; }
.flip { transform: rotate(180deg); }
.left { transform: rotate(90deg); }
.right { transform: rotate(-90deg); }
.fill { flex: 1; }

/* title bar */
.titlebar { display: flex; height: 17px; background: #e8e8e8; flex: none; }
.appmenu { width: 28px; background: linear-gradient(#8a8a8a, #606060); border: 1px solid #777; justify-content: space-between; overflow: hidden; }
.appmenu .logo { width: 15px; height: 15px; }
.appmenu .i { width: 10px; }
.qat { width: 14px; background: linear-gradient(#bbb, #8a8a8a); border: 1px solid #777; }
.titlebar h1 { flex: 1; margin: 0; padding-right: 235px; text-align: right; font-size: 12px; font-weight: 400; line-height: 18px; color: #f8f8f8; }
.search { width: 176px; border: 0; background: #f9f9f9; padding: 0 4px; }
.info { display: flex; margin: 1px 0; }
.info button { width: 20px; background: linear-gradient(#c8c8c8, #999); border: 1px solid #555; margin-right: -1px; }
.info .slim { width: 8px; }
.info .i { width: 13px; height: 13px; }
.winbtns { display: flex; margin-left: 9px; }
.winbtns button { width: 21px; }
.winbtns .i { width: 15px; height: 15px; stroke: #222; }
.winbtns .close { width: 36px; margin: 0 3px 2px 1px; background: #bcbcbc; }
.winbtns .close .i { stroke: #fff; }

/* docked toolbars */
.dock { background: #666; border-top: 1px solid #444; flex: none; }
.row { display: flex; height: 22px; padding-bottom: 2px; }
.grip { width: 7px; background: repeating-linear-gradient(#666 0 1px, #444 1px 2px); border: 1px solid #4d4d4d; }
.bar { display: flex; align-items: stretch; background: #efefef; border-bottom: 1px solid #3c3c3c; border-right: 1px solid #444; }
.bar > button { flex: 1; }
.bar > .drop { flex: 0 0 11px; overflow: hidden; }
.sep { width: 4px; margin: 2px 0; background: linear-gradient(90deg, transparent 1px, #999 1px 2px, transparent 2px); }
.std { width: 510px; }
.styles { width: 473px; }
.wspace { width: 177px; }
.layerbar { width: 315px; }
.propbar { width: 458px; }
.dimbar { width: 507px; }
.combo { display: grid; grid-template: "a" 100% / 100%; align-items: center; border: 1px solid #d2d2d2; background: #f0f0f0; }
.combo > * { grid-area: a; }
.combo > .i { justify-self: end; width: 15px; height: 15px; pointer-events: none; }
.combo select { appearance: none; width: 100%; height: 100%; border: 0; border-radius: 0; background: transparent; padding: 0 14px 0 6px; outline: 0; }
.combo select:disabled { color: #999; opacity: 1; }
.combo select:disabled ~ .i { stroke: #bbb; }
.state { display: flex; align-items: center; pointer-events: none; }
.state .i { width: 13px; height: 13px; }
.swatch { width: 9px; height: 9px; margin-left: 1px; background: #f4f41a; border: 1px solid #444; }
.rule { width: 50px; height: 1px; background: #444; margin-left: 1px; }
.short { width: 28px; }
.c1 { width: 96px; }
.c2 { width: 94px; }
.c1 select { padding-left: 14px; }
.c2 select { padding-left: 3px; }
.wspace .combo { width: 140px; }
.clayer { width: 236px; }
.clayer select { padding-left: 65px; }
.ccolor { width: 120px; }
.ccolor select { padding-left: 16px; }
.ccolor .swatch { margin-left: 4px; }
.cltype { width: 127px; }
.cltype select { padding-left: 53px; }
.clw { width: 98px; }
.clw select { padding-left: 32px; }
.cplot { flex: 1; border: 0; }
.cdim { width: 97px; }
.cdim select { padding-left: 15px; }

/* workspace */
.work { flex: 1; display: flex; min-height: 0; }
.side { flex: none; width: 20px; display: flex; flex-direction: column; }
.cap { height: 7px; flex: none; background: repeating-linear-gradient(#666 0 1px, #3c3c3c 1px 2px); border: 1px solid #444; }
.second { margin-top: 1px; }
.tools { display: flex; flex-direction: column; background: #efefef; border: 1px solid #444; border-top: 0; flex: none; }
.tools button { flex: 1; min-height: 0; }
.t19 { height: 335px; }
.t17 { height: 324px; }
.tmod { height: 299px; }
.t4 { height: 71px; }
.hsep { height: 5px; margin: 0 2px; background: linear-gradient(transparent 2px, #aaa 2px 3px, transparent 3px); }
.snapbar { margin-left: 3px; }
.modbar { margin-left: 3px; margin-right: 2px; }
.doc { flex: 1; min-width: 0; margin-left: 3px; border-left: 1px solid #aaa; border-top: 1px solid #999; display: flex; flex-direction: column; margin-bottom: 2px; }
.view { flex: 1; min-height: 0; display: flex; position: relative; background: #000; }
.canvas { flex: 1; min-width: 0; width: 0; height: 100%; background: #000; }
.vscroll { width: 15px; background: #efefef; display: flex; flex-direction: column; align-items: center; }
.vscroll .i { width: 15px; height: 15px; }
.vscroll .lead { flex: 0 0 105px; }
.thumb { width: 12px; height: 13px; background: #c8c8c8; }
.mdi { position: absolute; top: 4px; right: 20px; display: flex; }
.mdi button { width: 16px; }
.mdi .i { width: 14px; height: 14px; stroke: #e8e8e8; }
.part { fill: none; stroke: #fff; stroke-width: 4; stroke-linejoin: round; }
.axis { fill: none; stroke: #1a1a96; stroke-dasharray: 14 3 2 3; }
g.axis { stroke: #101080; }
.dim { fill: none; stroke: #c6c64a; }
.tips { fill: #ffff28; }
.dimtext { fill: #d4d470; font: 200 16px "DejaVu Sans Light", "DejaVu Sans", sans-serif; }
.ucs, .cross { fill: none; stroke: #d0d0d0; }
.ucs text { fill: #d0d0d0; stroke: none; font: 200 17px "DejaVu Sans Light", "DejaVu Sans", sans-serif; }

.tabs { display: flex; height: 15px; background: #efefef; flex: none; align-items: stretch; }
.nav { display: flex; }
.nav button { width: 12px; border-right: 1px solid #bbb; }
.nav svg { width: 9px; height: 9px; fill: #444; stroke: #444; stroke-width: 1; }
.tab { padding: 0 1px; }
.tab.on { background: #000; color: #eee; padding: 0 9px; clip-path: polygon(0 0, 100% 0, 88% 100%, 12% 100%); }
.slash { width: 8px; fill: none; stroke: #555; }
.hscroll { margin-left: auto; width: 402px; margin-right: 14px; display: flex; align-items: center; }
.hscroll .i { width: 15px; height: 15px; }
.hthumb { width: 13px; height: 12px; background: #c8c8c8; }

/* command window */
.command { display: flex; height: 62px; border-top: 2px solid #4a4a4a; border-bottom: 1px solid #444; flex: none; background: #f8f8f8; }
.cgrip { width: 12px; background: linear-gradient(#777 2px, #aaa 2px); }
.cbody { flex: 1; display: flex; flex-direction: column; font: 11px/13px "Liberation Mono", monospace; color: #222; }
.history { flex: 1; display: flex; justify-content: space-between; border-bottom: 1px solid #aaa; }
.history pre { margin: 0; padding-left: 2px; font: inherit; }
.cscroll { width: 14px; display: flex; flex-direction: column; align-items: center; justify-content: space-between; }
.cscroll .i, .pscroll .i { width: 15px; height: 15px; }
.cthumb { width: 11px; height: 14px; margin-top: 4px; background: #c8c8c8; }
.prompt { height: 13px; display: flex; padding-left: 2px; }
.prompt label { line-height: 12px; }
.prompt input { flex: 1; border: 0; background: transparent; outline: 0; min-width: 0; }
.pscroll { width: 68px; display: flex; align-items: center; }
.pscroll .right { margin-left: 12px; }

/* status bar */
.status { display: flex; height: 19px; background: linear-gradient(#858585, #6e6e6e 50%, #8c8c8c); flex: none; align-items: stretch; }
.coords { width: 138px; padding-left: 9px; color: #111; white-space: nowrap; font-size: 9px; line-height: 20px; }
.sgroup { display: flex; margin-right: 9px; }
.sgroup button { width: 18px; background: linear-gradient(#bcbcbc, #979797); border: 1px solid #757575; border-width: 0 1px 1px 0; }
.sgroup .on { background: linear-gradient(#d8eef4, #94bfd0); }
.sgroup .i { width: 16px; height: 16px; }
.sgroup .i.tiny { width: 12px; height: 12px; }
.modes { margin: 0; }
.annos { margin-right: 4px; }
.sgroup .scale { width: 40px; }
.sgroup .slim { width: 10px; overflow: hidden; }
.sgroup.last { margin-right: 1px; }
.nav4 button { position: relative; }
.sgroup .pointer { position: absolute; left: 11px; top: 2px; width: 12px; height: 18px; fill: #fff; stroke: #555; z-index: 1; }

/* taskbar */
.taskbar { display: flex; height: 31px; background: #586f94; flex: none; color: #fff; }
.taskbar > button { width: 46px; margin-right: 4px; }
.taskbar > button svg { width: 27px; height: 27px; }
.taskbar > .start { width: 40px; margin-right: 0; }
.taskbar .open { background: #8292ac; border: 1px solid #9aa8bf; }
.taskbar .active { background: #a8b3c4; border: 1px solid #e4e8ee; }
.taskbar .stack { border-right: 4px double #9aa8bf; width: 47px; }
.sw { fill: #fff; font: bold 15px "Liberation Sans", sans-serif; }
.tray { display: flex; align-items: center; gap: 4px; padding-right: 14px; }
.tray svg { width: 16px; height: 16px; }
.clock { width: 62px; margin-right: 7px; padding-top: 3px; text-align: center; line-height: 13px; }
```
